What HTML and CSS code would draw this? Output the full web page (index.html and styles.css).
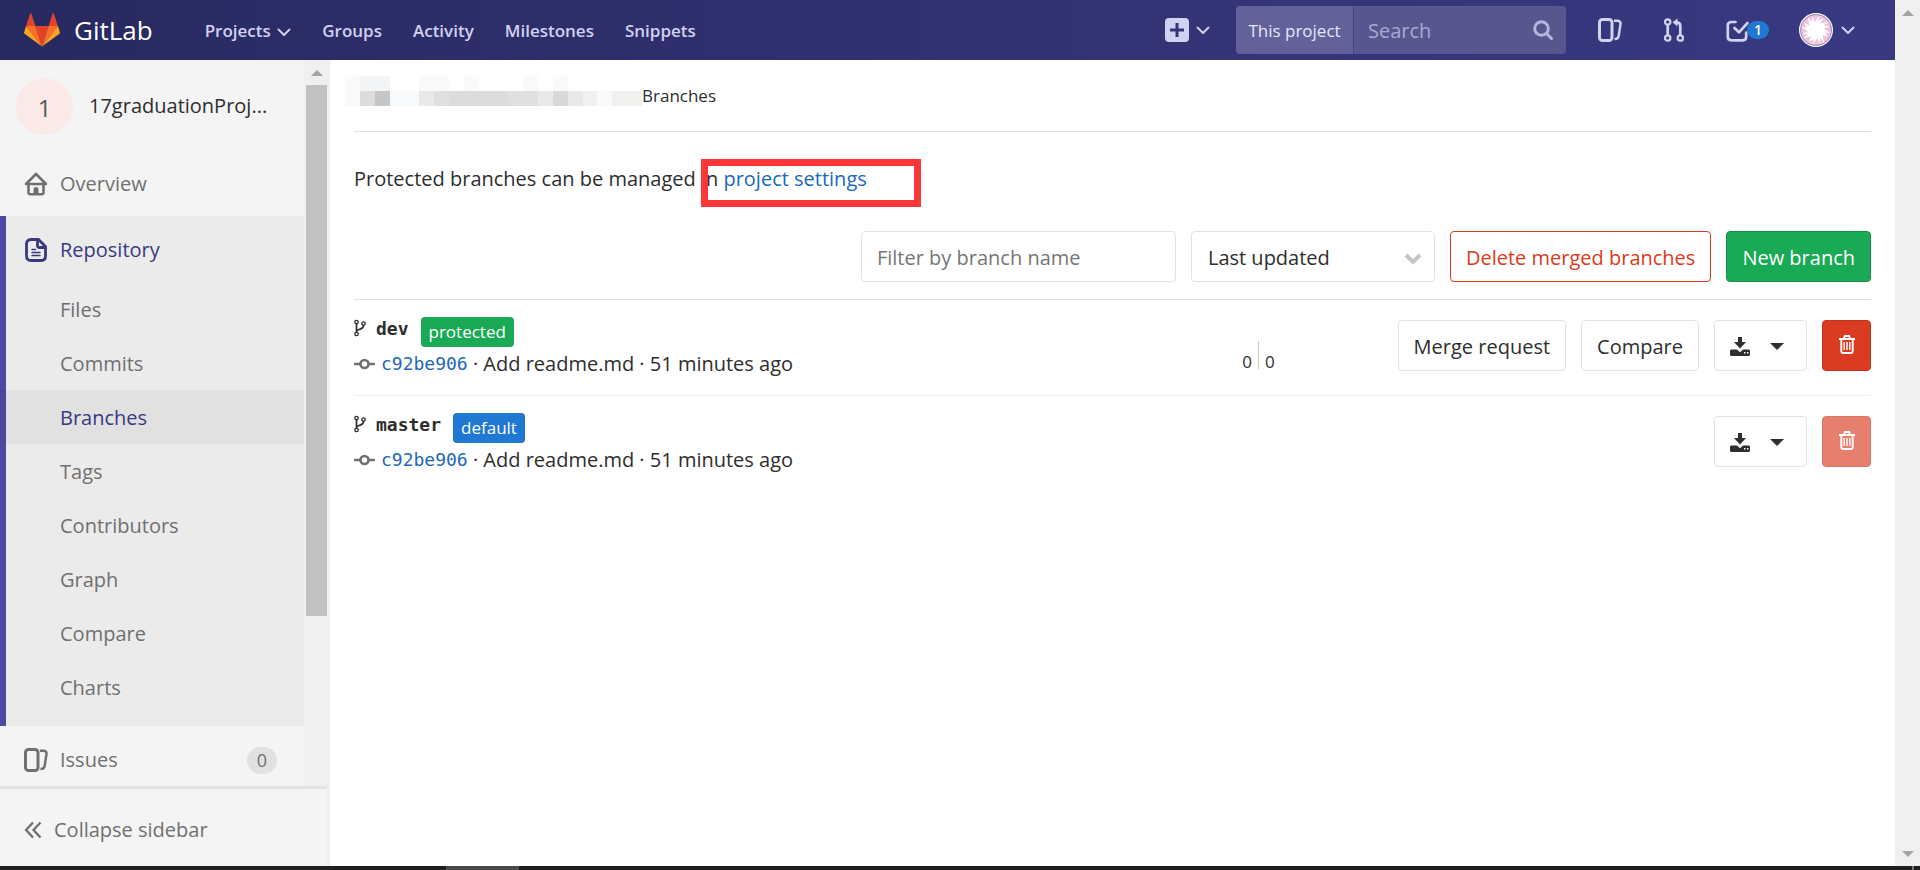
FILE: index.html
```html
<!DOCTYPE html>
<html lang="en">
<head>
  <meta charset="UTF-8">
  <meta name="viewport" content="width=device-width, initial-scale=1.0">
  <title>Branches</title>
  <link rel="stylesheet" href="styles.css">
</head>
<body>
  <!-- icons -->
  <svg class="sprite" aria-hidden="true">
    <symbol id="chevron" viewBox="0 0 14 9"><path d="M1.500 1.500 7 7l5.500-5.500" fill="none" stroke="currentColor" stroke-width="2" stroke-linecap="round" stroke-linejoin="round"/></symbol>
    <symbol id="issues" viewBox="0 0 24 24"><rect x="1.500" y="1.500" width="12.500" height="21" rx="3" fill="none" stroke="currentColor" stroke-width="3"/><path d="M16 2.700h3.500c2 0 3.300 1.200 3 3.200l-1.800 12c-.3 2-1.700 3.200-4.200 3.100" fill="none" stroke="currentColor" stroke-width="2.500"/></symbol>
    <symbol id="merge" viewBox="0 0 20 24"><g fill="none" stroke="currentColor" stroke-width="2.200"><circle cx="3.700" cy="4" r="2.700"/><circle cx="3.700" cy="20" r="2.700"/><circle cx="16.300" cy="20" r="2.700"/><path d="M3.700 6.500v11M16.300 17.500V8c0-2.500-1-3.700-4-3.700" stroke-width="2.700"/></g><path d="M13.500.5v8L8.500 4.300z" fill="currentColor"/></symbol>
    <symbol id="todo" viewBox="0 0 24 24"><path d="M9.500 4H5.500C3.200 4 1.800 5.200 1.800 7.200v11.600c0 2.200 1.300 3.500 3.500 3.500h11.400c2.200 0 3.500-1.300 3.500-3.500v-4.300" fill="none" stroke="currentColor" stroke-width="2.700" stroke-linecap="round"/><path d="m8.500 10 4.500 4.300L21.500 5" fill="none" stroke="currentColor" stroke-width="2.700" stroke-linecap="round" stroke-linejoin="round"/></symbol>
    <symbol id="branch" viewBox="0 0 12 18"><g fill="none" stroke="currentColor" stroke-width="1.300"><circle cx="2.500" cy="3" r="1.700"/><circle cx="2.500" cy="15" r="1.700"/><circle cx="9.500" cy="4.500" r="1.700"/><path d="M2.500 4.700v8.600M9.500 6.200c0 3.800-2.500 3.600-4.500 4.300-1.500.5-2.500 1-2.500 2.500" stroke-width="1.700"/></g></symbol>
    <symbol id="commit" viewBox="0 0 21 12"><circle cx="10.500" cy="6" r="4" fill="none" stroke="currentColor" stroke-width="2.700"/><path d="M1 6h4.500M15.500 6H20" stroke="currentColor" stroke-width="2.700" stroke-linecap="round"/></symbol>
    <symbol id="download" viewBox="0 0 20 19"><path d="M8 0h4v5h4l-6 6.500L4 5h4z" fill="currentColor"/><path d="M1.500 12.500H7l3 2.700 3-2.700h5.500c.8 0 1.500.7 1.500 1.500v3.500c0 .8-.7 1.500-1.500 1.500h-17C.7 19 0 18.300 0 17.500V14c0-.8.7-1.500 1.500-1.500zM14 15v1.500h1.500V15zm3 0v1.500h1.500V15z" fill="currentColor" fill-rule="evenodd"/></symbol>
    <symbol id="trash" viewBox="0 0 16 19"><path d="M0 4h16M5 3.500 5.800 1h4.400l.8 2.500M2.300 4v12.500c0 1 .6 1.500 1.500 1.500h8.400c.9 0 1.500-.5 1.500-1.500V4" fill="none" stroke="currentColor" stroke-width="1.900"/><path d="M5.200 7v8M8 7v8M10.800 7v8" stroke="currentColor" stroke-width="1.400"/></symbol>
    <symbol id="home" viewBox="0 0 24 24"><g fill="none" stroke="currentColor" stroke-width="2.600" stroke-linejoin="round"><path d="M12 2 2 12h20z"/><path d="M4.500 12v8.500c0 1 .7 1.700 1.700 1.700h11.600c1 0 1.700-.7 1.700-1.700V12"/></g><path d="M9.500 22v-4.500a2.500 2.500 0 0 1 5 0V22z" fill="currentColor"/></symbol>
    <symbol id="doc" viewBox="0 0 22 24"><path d="M6 1.500h7.500l7 7V18c0 3-1.500 4.500-4.500 4.500H6c-3 0-4.500-1.500-4.500-4.500V6C1.500 3 3 1.500 6 1.500z" fill="none" stroke="currentColor" stroke-width="2.800"/><path d="M12.500 2v5.500c0 1.300.7 2 2 2H20" fill="none" stroke="currentColor" stroke-width="2.800"/><path d="M7 11.500h3.500M7 14.500h8M7 17.500h8" stroke="currentColor" stroke-width="1.400" stroke-linecap="round"/></symbol>
    <symbol id="tooth" viewBox="0 0 34 34"><path d="M13 1.500h8L15.500 9zM21 1.500l5.500 2.500-7.500 4z" fill="#efc3dc"/></symbol>
  </svg>

  <header class="navbar">
    <a href="#" class="brand">
      <svg class="tanuki" viewBox="0 0 36 34" aria-hidden="true">
        <path d="M18 33.500 24.600 13H11.400z" fill="#e24329"/>
        <path d="M18 33.500 11.400 13H2.100z" fill="#fc6d26"/>
        <path d="m2.100 13-2 6.200c-.2.600 0 1.200.5 1.500L18 33.500z" fill="#fca326"/>
        <path d="M2.100 13h9.300l-4-12.300c-.2-.7-1.100-.7-1.300 0z" fill="#e24329"/>
        <path d="M18 33.500 24.600 13h9.300z" fill="#fc6d26"/>
        <path d="m33.900 13 2 6.200c.2.600 0 1.200-.5 1.500L18 33.500z" fill="#fca326"/>
        <path d="M33.900 13h-9.300l4-12.300c.2-.7 1.100-.7 1.300 0z" fill="#e24329"/>
      </svg>
      <span>GitLab</span>
    </a>
    <nav class="main-nav">
      <a href="#">Projects <svg class="chevron"><use href="#chevron"/></svg></a>
      <a href="#">Groups</a>
      <a href="#">Activity</a>
      <a href="#">Milestones</a>
      <a href="#">Snippets</a>
    </nav>
    <div class="tools">
      <button type="button" class="new-menu" aria-label="New">
        <svg class="plus" viewBox="0 0 24 24"><rect width="24" height="24" rx="4" fill="currentColor"/><path d="M12 5v14M5 12h14" stroke="#35347a" stroke-width="3"/></svg>
        <svg class="chevron"><use href="#chevron"/></svg>
      </button>
      <form class="search">
        <label for="search">This project</label>
        <input type="text" id="search" placeholder="Search">
        <button type="submit" aria-label="Search"><svg viewBox="0 0 20 20"><circle cx="8.500" cy="8.500" r="6.800" fill="none" stroke="currentColor" stroke-width="3"/><path d="m13.500 13.500 5 5" stroke="currentColor" stroke-width="3" stroke-linecap="round"/></svg></button>
      </form>
      <a href="#" class="tool issues" aria-label="Issues"><svg><use href="#issues"/></svg></a>
      <a href="#" class="tool merges" aria-label="Merge requests"><svg><use href="#merge"/></svg></a>
      <a href="#" class="tool todos" aria-label="Todos"><svg><use href="#todo"/></svg><span class="count">1</span></a>
      <button type="button" class="user" aria-label="Account">
        <svg class="avatar" viewBox="0 0 34 34">
          <circle cx="17" cy="17" r="17" fill="#fff"/>
          <use href="#tooth"/>
          <use href="#tooth" transform="rotate(45 17 17)"/>
          <use href="#tooth" transform="rotate(90 17 17)"/>
          <use href="#tooth" transform="rotate(135 17 17)"/>
          <use href="#tooth" transform="rotate(180 17 17)"/>
          <use href="#tooth" transform="rotate(225 17 17)"/>
          <use href="#tooth" transform="rotate(270 17 17)"/>
          <use href="#tooth" transform="rotate(315 17 17)"/>
          <circle cx="17" cy="17" r="15.500" fill="none" stroke="#8d8cbd"/>
        </svg>
        <svg class="chevron"><use href="#chevron"/></svg>
      </button>
    </div>
  </header>

  <div class="page">
    <aside class="sidebar">
      <div class="side-scroll">
        <div class="side-content">
          <a href="#" class="project"><span class="letter">1</span><strong>17graduationProj...</strong></a>
          <a href="#" class="item"><svg><use href="#home"/></svg>Overview</a>
          <div class="group">
            <a href="#" class="item"><svg><use href="#doc"/></svg>Repository</a>
            <ul>
              <li><a href="#">Files</a></li>
              <li><a href="#">Commits</a></li>
              <li><a href="#" class="active">Branches</a></li>
              <li><a href="#">Tags</a></li>
              <li><a href="#">Contributors</a></li>
              <li><a href="#">Graph</a></li>
              <li><a href="#">Compare</a></li>
              <li><a href="#">Charts</a></li>
            </ul>
          </div>
          <a href="#" class="item"><svg><use href="#issues"/></svg>Issues<span class="badge">0</span></a>
        </div>
        <div class="side-bar"><i class="arrow-up"></i><i class="thumb"></i></div>
      </div>
      <button type="button" class="collapse"><svg viewBox="0 0 18 18"><path d="M9 1.500 2 9l7 7.500M16.500 1.500l-7 7.500 7 7.500" fill="none" stroke="currentColor" stroke-width="2.300"/></svg>Collapse sidebar</button>
    </aside>

    <main class="content">
      <div class="breadcrumbs">
        <svg class="hidden-name" viewBox="0 0 20 2" preserveAspectRatio="none" aria-hidden="true" shape-rendering="crispEdges">
          <path d="M0 0h1v2H0zM5 0h2v1H5zM8 0h1v1H8zM12 0h1v1h-1zM14 0h1v1h-1z" fill="#fafafa"/>
          <path d="M1 0h2v1H1z" fill="#f3f4f6"/>
          <path d="M1 1h1v1H1zM7 1h4v1H7z" fill="#dcdcdc"/>
          <path d="M2 1h1v1H2z" fill="#c4c6c8"/>
          <path d="M3 1h2v1H3zM17 1h1v1h-1z" fill="#f8f9fa"/>
          <path d="M5 1h1v1H5zM13 1h1v1h-1zM15 1h1v1h-1z" fill="#e8e9e8"/>
          <path d="M6 1h1v1H6zM11 1h2v1h-2z" fill="#e0e0e1"/>
          <path d="M14 1h1v1h-1z" fill="#d8d8db"/>
          <path d="M16 1h1v1h-1zM18 1h2v1h-2z" fill="#f0f0ee"/>
        </svg>
        <h1>Branches</h1>
      </div>
      <p class="notice">Protected branches can be managed in <a href="#" class="marked">project settings</a></p>
      <form class="filters">
        <input type="text" placeholder="Filter by branch name" aria-label="Filter by branch name">
        <div class="select-wrap">
          <select aria-label="Sort by">
            <option>Last updated</option>
          </select>
          <svg viewBox="0 0 18 12"><path d="m2 2 7 7 7-7" fill="none" stroke="currentColor" stroke-width="4"/></svg>
        </div>
        <button type="button" class="btn btn-outline">Delete merged branches</button>
        <button type="button" class="btn btn-new">New branch</button>
      </form>
      <ul class="branches">
        <li>
          <div class="info">
            <div class="name"><svg class="fork"><use href="#branch"/></svg><a href="#">dev</a><span class="label label-green">protected</span></div>
            <div class="commit"><svg><use href="#commit"/></svg><a href="#">c92be906</a> · Add readme.md · 51 minutes ago</div>
          </div>
          <div class="diverge"><span>0</span><span>0</span></div>
          <div class="controls">
            <button type="button" class="btn">Merge request</button>
            <button type="button" class="btn">Compare</button>
            <button type="button" class="btn btn-download" aria-label="Download"><svg><use href="#download"/></svg><i class="caret"></i></button>
            <button type="button" class="btn btn-remove" aria-label="Delete branch"><svg><use href="#trash"/></svg></button>
          </div>
        </li>
        <li>
          <div class="info">
            <div class="name"><svg class="fork"><use href="#branch"/></svg><a href="#">master</a><span class="label label-blue">default</span></div>
            <div class="commit"><svg><use href="#commit"/></svg><a href="#">c92be906</a> · Add readme.md · 51 minutes ago</div>
          </div>
          <div class="controls">
            <button type="button" class="btn btn-download" aria-label="Download"><svg><use href="#download"/></svg><i class="caret"></i></button>
            <button type="button" class="btn btn-remove" aria-label="Delete branch" disabled><svg><use href="#trash"/></svg></button>
          </div>
        </li>
      </ul>
    </main>
  </div>
  <div class="page-bar"><i class="arrow-up"></i><i class="arrow-down"></i></div>
  <footer class="taskbar"><i class="task"></i><i class="edge"></i></footer>
</body>
</html>
```
FILE: styles.css
```css
*{box-sizing:border-box;}
body{display:grid; grid-template-columns:1fr 25px; grid-template-rows:60px 1fr 4px; height:100vh; margin:0; overflow:hidden; font-family:"Open Sans","Noto Sans",sans-serif; font-size:20px; line-height:28px; color:#2e2e2e; background:#fff;}
a{color:inherit; text-decoration:none;}
button,input,select{font:inherit; color:inherit;}
button{padding:0; border:0; background:none; cursor:pointer;}
ul{margin:0; padding:0; list-style:none;}
svg{flex:none;}
.sprite{position:absolute; width:0; height:0;}
.chevron{width:14px; height:9px;}

/* top bar */
.navbar{display:flex; align-items:center; padding:0 40px 0 24px; background:linear-gradient(to right,#292961,#393982); color:#d1d1f0;}
.brand{display:flex; align-items:center; gap:14px; color:#fff; font-size:26px;}
.tanuki{width:36px; height:34px;}
.main-nav{display:flex; gap:31px; margin-left:52px; padding-top:2px; font-size:17px; font-weight:600;}
.main-nav .chevron{margin-left:2px;}
.tools{display:flex; align-items:center; margin-left:auto;}
.new-menu,.user{display:flex; align-items:center; gap:7px;}
.plus{width:24px; height:24px;}
.search{display:flex; width:330px; height:48px; margin-left:26px; border-radius:4px; overflow:hidden; background:#57568f;}
.search label{width:118px; padding:11px 0; border-right:1px solid #43438a; background:#626199; color:#e6e6f6; font-size:17px; text-align:center;}
.search input{flex:1; min-width:0; padding:2px 14px 0; border:0; background:none;}
.search input::placeholder{color:#a9a8d4; opacity:1;}
.search button{width:46px; padding-top:6px; color:#b5b5df;}
.search svg{width:20px; height:20px;}
.tool{display:flex; align-items:center;}
.tool svg{width:24px; height:24px;}
.issues{margin-left:32px;}
.merges{margin-left:42px;}
.merges svg{width:20px;}
.todos{margin-left:42px;}
.count{width:22px; height:18px; margin-left:-3px; border-radius:9px; background:#1f78d1; color:#fff; font-size:14px; font-weight:600; line-height:18px; text-align:center;}
.user{margin-left:30px; gap:8px;}
.avatar{width:34px; height:34px;}

/* sidebar */
.page{display:flex; min-height:0;}
.sidebar{display:flex; flex-direction:column; width:330px; background:#f4f4f4; border-right:3px solid #efefef; color:#707070;}
.side-scroll{display:flex; flex:1; min-height:0; border-bottom:3px solid #e3e3e3;}
.side-content{flex:1; overflow:hidden;}
.side-bar,.page-bar{display:flex; flex-direction:column; align-items:center; background:#f0f0f0;}
.side-bar{width:23px; padding-left:2px;}
.arrow-up,.arrow-down{border:6px solid transparent;}
.arrow-up{margin-top:4px; border-bottom-color:#a3a3a3;}
.arrow-down{margin:auto 0 3px; border-top-color:#a3a3a3;}
.thumb{width:21px; height:531px; margin-top:9px; background:#c1c1c1;}
.page-bar{grid-column:2; grid-row:1 / 3;}
.project{display:flex; align-items:center; gap:16px; height:90px; padding:2px 16px 0;}
.project strong{color:#2e2e2e; font-weight:500;}
.letter{width:57px; height:57px; border-radius:50%; background:#fbe9e7; color:#555; font-size:24px; line-height:59px; text-align:center;}
.item{display:flex; align-items:center; height:66px; padding:2px 27px 0 24px;}
.item svg{width:24px; height:24px; margin-right:12px;}
.group{padding-bottom:12px; background:#ebebeb; box-shadow:inset 6px 0 #4b4ba3;}
.group .item{color:#393982; font-weight:500;}
.group li a{display:block; height:54px; padding:14px 0 12px 60px;}
.group .active{background:rgba(0,0,0,.04); color:#393982; font-weight:500;}
.badge{margin-left:auto; padding:0 10px; border-radius:14px; background:#e1e1e1; font-size:18px; line-height:27px;}
.collapse{display:flex; align-items:center; gap:12px; height:77px; padding:4px 24px 0;}
.collapse svg{width:18px; height:18px;}

/* content */
.content{flex:1; min-width:0; padding:0 24px;}
.breadcrumbs{display:flex; align-items:center; height:72px; border-bottom:1px solid #e1e1e1;}
.hidden-name{width:297px; height:30px; margin:-10px 0 0 -9px;}
.breadcrumbs h1{margin:0; font-size:17px; font-weight:500;}
.notice{margin:33px 0 38px;}
.notice a{color:#1b69b6;}
.marked{position:relative;}
.marked::after{content:""; position:absolute; top:-6px; left:-22px; right:-54px; height:34px; border:7px solid #fc3737; pointer-events:none;}
.filters{display:flex; justify-content:flex-end; gap:15px; padding-bottom:17px; border-bottom:1px solid #e1e1e1;}
.filters input,.filters select,.btn{height:51px; border:1px solid #e3e3e3; border-radius:4px; background:#fff;}
.filters input{width:315px; padding:2px 15px 0;}
.filters input::placeholder{color:#767676; opacity:1;}
.select-wrap{position:relative; width:244px;}
.select-wrap select{width:100%; padding:2px 16px 0; appearance:none;}
.select-wrap svg{position:absolute; top:22px; right:13px; width:18px; height:12px; color:#c4c4c4;}
.btn{padding:2px 15px 0; white-space:nowrap;}
.filters .btn-outline{border-color:#db3b21; color:#db3b21;}
.filters .btn-new{border-color:#168f48; background:#1aaa55; color:#fff;}
.branches li{display:flex; height:96px; padding-top:16px; border-bottom:1px solid #f0f0f0;}
.branches li:last-child{border-bottom:0;}
.info{flex:1;}
.name{display:flex; align-items:flex-start; height:34px; font-family:"DejaVu Sans Mono",monospace; font-size:18px; font-weight:700; line-height:26px;}
.fork{width:12px; height:18px; margin:3px 10px 0 0;}
.label{height:30px; margin:1px 0 0 12px; padding:0 8px; border-radius:4px; color:#fff; font-family:"Open Sans","Noto Sans",sans-serif; font-size:17px; font-weight:400; line-height:30px;}
.label-green{background:#1aaa55;}
.label-blue{background:#1f78d1;}
.commit{display:flex; align-items:center; white-space:pre;}
.commit svg{width:21px; height:12px; margin-right:6px; color:#707070;}
.commit a{color:#1b69b6; font-family:"DejaVu Sans Mono",monospace; font-size:18px;}
.diverge{display:flex; height:28px; margin:25px 117px 0 0; font-size:17px; line-height:42px;}
.diverge span{padding:0 6px;}
.diverge span + span{border-left:1px solid #ccc;}
.controls{display:flex; gap:15px; padding-top:4px;}
.btn-download{display:flex; align-items:center; gap:20px; width:93px; padding-right:0;}
.btn-download svg{width:20px; height:19px;}
.caret{border:7px solid transparent; border-top-color:#2e2e2e; border-bottom:0;}
.btn-remove{width:49px; padding:3px 0 0; border-color:#c0341d; background:#db3b21; color:#fff;}
.btn-remove svg{width:16px; height:19px;}
.btn-remove:disabled{opacity:.65;}

/* strip under the window */
.taskbar{display:flex; grid-column:1 / 3; background:#1f1f21;}
.task{width:73px; margin-left:446px; background:#4a4a4c;}
.edge{width:2px; margin:0 6px 0 auto; background:#77777a;}
```
